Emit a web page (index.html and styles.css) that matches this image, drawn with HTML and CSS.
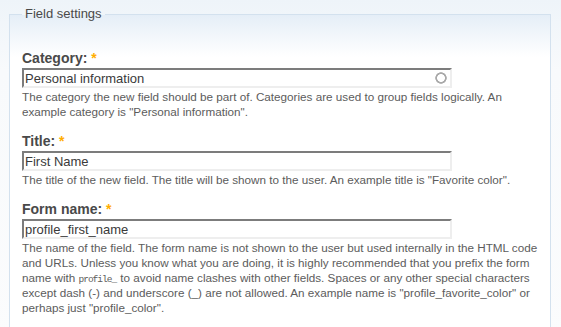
FILE: index.html
```html
<!DOCTYPE html>
<html lang="en">
<head>
    <meta charset="UTF-8">
    <meta name="viewport" content="width=device-width, initial-scale=1.0">
    <title>Field settings</title>
    <link rel="stylesheet" href="styles.css">
</head>
<body>
    <fieldset class="settings">
        <legend>Field settings</legend>

        <div class="form-item">
            <label class="form-label" for="edit-category">Category: <span class="marker">*</span></label>
            <input type="text" class="form-text autocomplete" id="edit-category" value="Personal information">
            <div class="description">The category the new field should be part of. Categories are used to group fields logically. An example category is "Personal information".</div>
        </div>

        <div class="form-item">
            <label class="form-label" for="edit-title">Title: <span class="marker">*</span></label>
            <input type="text" class="form-text" id="edit-title" value="First Name">
            <div class="description">The title of the new field. The title will be shown to the user. An example title is "Favorite color".</div>
        </div>

        <div class="form-item">
            <label class="form-label" for="edit-name">Form name: <span class="marker">*</span></label>
            <input type="text" class="form-text" id="edit-name" value="profile_first_name">
            <div class="description">The name of the field. The form name is not shown to the user but used internally in the HTML code and URLs. Unless you know what you are doing, it is highly recommended that you prefix the form name with <code>profile_</code> to avoid name clashes with other fields. Spaces or any other special characters except dash (-) and underscore (_) are not allowed. An example name is "profile_favorite_color" or perhaps just "profile_color".</div>
        </div>
    </fieldset>
</body>
</html>
```

FILE: styles.css
```css
body {
    margin: 0;
    font-family: "Liberation Sans", Arial, sans-serif;
    color: #494949;
    background: linear-gradient(#eef4f9, #f8fafc 70px, #fbfcfd);
    min-height: 327px;
}
.settings {
    margin: 6px 10px 0 9px;
    padding: 28px 12px 20px 12px;
    border: 1px solid #d3e1ee;
    background: linear-gradient(#e5eef7, #ffffff 42px);
}
.settings legend {
    padding: 0 3px;
    font-size: 13px;
    line-height: 16px;
    color: #494949;
}
.form-item {
    margin-bottom: 14px;
}
.form-label {
    display: block;
    font-size: 14px;
    font-weight: bold;
    line-height: 16px;
    margin-bottom: 2px;
    color: #494949;
}
.marker {
    color: #ffae00;
}
.form-text {
    display: block;
    box-sizing: border-box;
    width: 430px;
    height: 20px;
    margin: 0;
    padding: 0 0 0 1px;
    border: 2px solid;
    border-color: #7c7c7c #eeeeee #eeeeee #7c7c7c;
    background: #fff;
    font-family: "Liberation Sans", Arial, sans-serif;
    font-size: 13px;
    color: #3a3a3a;
    outline: none;
}
.autocomplete {
    background: radial-gradient(circle at right 9px top 50%, transparent 3.6px, #a9a9a9 4.2px, #a9a9a9 5.4px, transparent 6px) #fff;
}
.description {
    margin-top: 1px;
    font-size: 11.7px;
    line-height: 15px;
    color: #5c5c5c;
}
.description code {
    font-family: "Liberation Mono", monospace;
    font-size: 9.5px;
    line-height: 1;
    letter-spacing: -1px;
    padding-right: 1px;
}
```
